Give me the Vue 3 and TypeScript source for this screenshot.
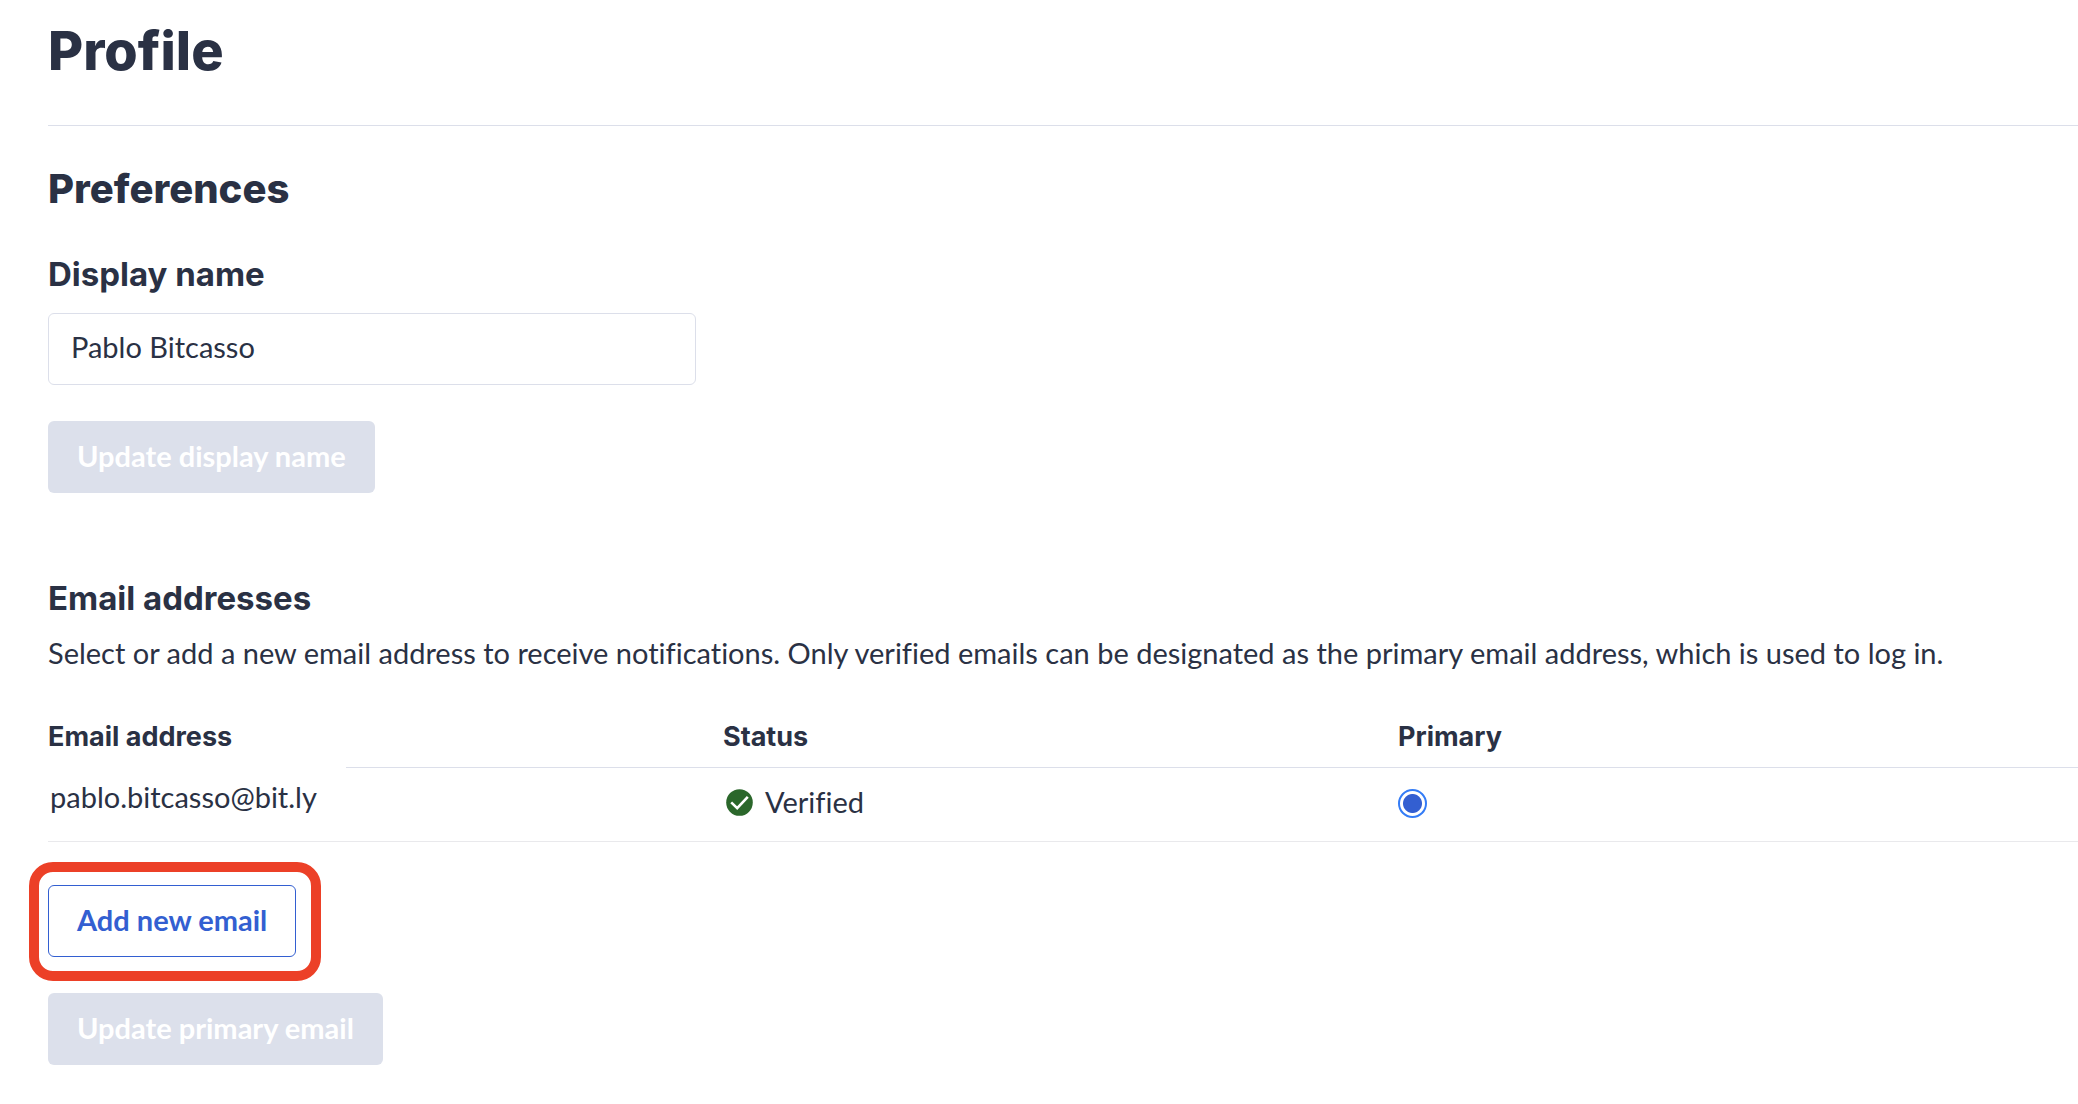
<script setup lang="ts">
import { ref } from 'vue'

interface EmailEntry {
  address: string
  status: string
}

const displayName = ref('Pablo Bitcasso')
const emails: EmailEntry[] = [{ address: 'pablo.bitcasso@bit.ly', status: 'Verified' }]
const primary = ref('pablo.bitcasso@bit.ly')
</script>

<template>
  <main class="page">
    <h1>Profile</h1>

    <section>
      <h2>Preferences</h2>
      <label class="heading name-label" for="display-name">Display name</label>
      <input id="display-name" v-model="displayName" class="text-input" type="text" />
      <button class="btn btn-disabled" type="button" disabled>Update display name</button>
    </section>

    <section class="emails">
      <h3 class="heading">Email addresses</h3>
      <p>
        Select or add a new email address to receive notifications. Only verified emails can be
        designated as the primary email address, which is used to log in.
      </p>

      <table>
        <thead>
          <tr>
            <th class="col-address" scope="col">Email address</th>
            <th class="col-status" scope="col">Status</th>
            <th scope="col">Primary</th>
          </tr>
        </thead>
        <tbody>
          <tr v-for="email in emails" :key="email.address">
            <td class="address">{{ email.address }}</td>
            <td>
              <span class="status">
                <svg viewBox="0 0 27 27" width="27" height="27" aria-hidden="true">
                  <circle cx="13.5" cy="13.5" r="13.3" fill="#2b672b" />
                  <path d="M5.2 13.4 L11.2 19.2 L21.8 7.8" fill="none" stroke="#fff" stroke-width="2.6" />
                </svg>
                {{ email.status }}
              </span>
            </td>
            <td>
              <input
                v-model="primary"
                class="radio"
                type="radio"
                name="primary"
                :value="email.address"
                :aria-label="`Primary: ${email.address}`"
              />
            </td>
          </tr>
        </tbody>
      </table>

      <div class="highlight">
        <button class="btn btn-outline" type="button">Add new email</button>
      </div>
      <button class="btn btn-disabled" type="button" disabled>Update primary email</button>
    </section>
  </main>
</template>

<style>
body {
  margin: 0;
  background: #fff;
}
</style>

<style scoped>
.page {
  padding: 15px 0 36px 48px;
  color: #2a3144;
  font-family: Lato, sans-serif;
  font-size: 29px;
  font-variant-ligatures: none;
  line-height: 40px;
}

h1,
h2,
.heading,
th {
  font-family: Inter, sans-serif;
}

h1 {
  margin: 0;
  padding-bottom: 38px;
  border-bottom: 1px solid #dcdfea;
  font-size: 54px;
  font-weight: 800;
  line-height: 72px;
}

h2 {
  margin: 39px 0 41px;
  font-size: 40px;
  font-weight: 800;
  line-height: 48px;
}

.heading {
  display: block;
  margin: 0;
  font-size: 33px;
  font-weight: 700;
  line-height: 40px;
}

.name-label {
  margin-bottom: 19px;
}

.text-input {
  display: block;
  box-sizing: border-box;
  width: 100%;
  max-width: 648px;
  height: 72px;
  margin: 0 0 36px;
  padding: 0 22px 6px;
  border: 1px solid #dcdfea;
  border-radius: 6px;
  background: #fff;
  color: inherit;
  font: inherit;
}

.btn {
  display: block;
  height: 72px;
  padding: 0 28px 2px;
  border: 1px solid transparent;
  border-radius: 6px;
  font: inherit;
  font-weight: 700;
}

.btn-disabled {
  background: #dce0eb;
  color: #fff;
}

.btn-outline {
  border-color: #335fd1;
  background: #fff;
  color: #335fd1;
}

.emails {
  margin-top: 85px;
}

p {
  margin: 15px 0 44px;
}

table {
  width: 100%;
  table-layout: fixed;
  border-collapse: separate;
  border-spacing: 0;
}

th,
td {
  padding: 0;
  text-align: left;
  vertical-align: top;
}

th {
  padding-bottom: 10px;
  border-bottom: 1px solid #dcdfea;
  font-size: 27px;
  font-weight: 700;
}

.col-address,
.col-status {
  width: 33.25%;
}

/* The rule under the first heading starts past the address text. */
.col-address {
  padding-bottom: 11px;
  border-bottom: 0;
  background: linear-gradient(#dcdfea, #dcdfea) 298px 100% / 100% 1px no-repeat;
}

td {
  padding: 14px 0 19px;
  border-bottom: 1px solid #e9e9ec;
}

.address {
  padding: 9px 0 0 2px;
}

.status {
  display: flex;
  align-items: center;
  gap: 12px;
  padding-left: 3px;
}

.radio {
  display: block;
  appearance: none;
  box-sizing: border-box;
  width: 29px;
  height: 29px;
  margin: 7px 0 0;
  border: 2px solid #347cf6;
  border-radius: 50%;
  background: radial-gradient(circle, #335fd1 9px, #fff 10px);
}

.highlight {
  position: relative;
  width: fit-content;
  margin: 43px 0 36px;
}

.highlight::after {
  content: '';
  position: absolute;
  inset: -23px -25px -24px -19px;
  border: 10px solid #ec4027;
  border-radius: 24px;
  pointer-events: none;
}
</style>
